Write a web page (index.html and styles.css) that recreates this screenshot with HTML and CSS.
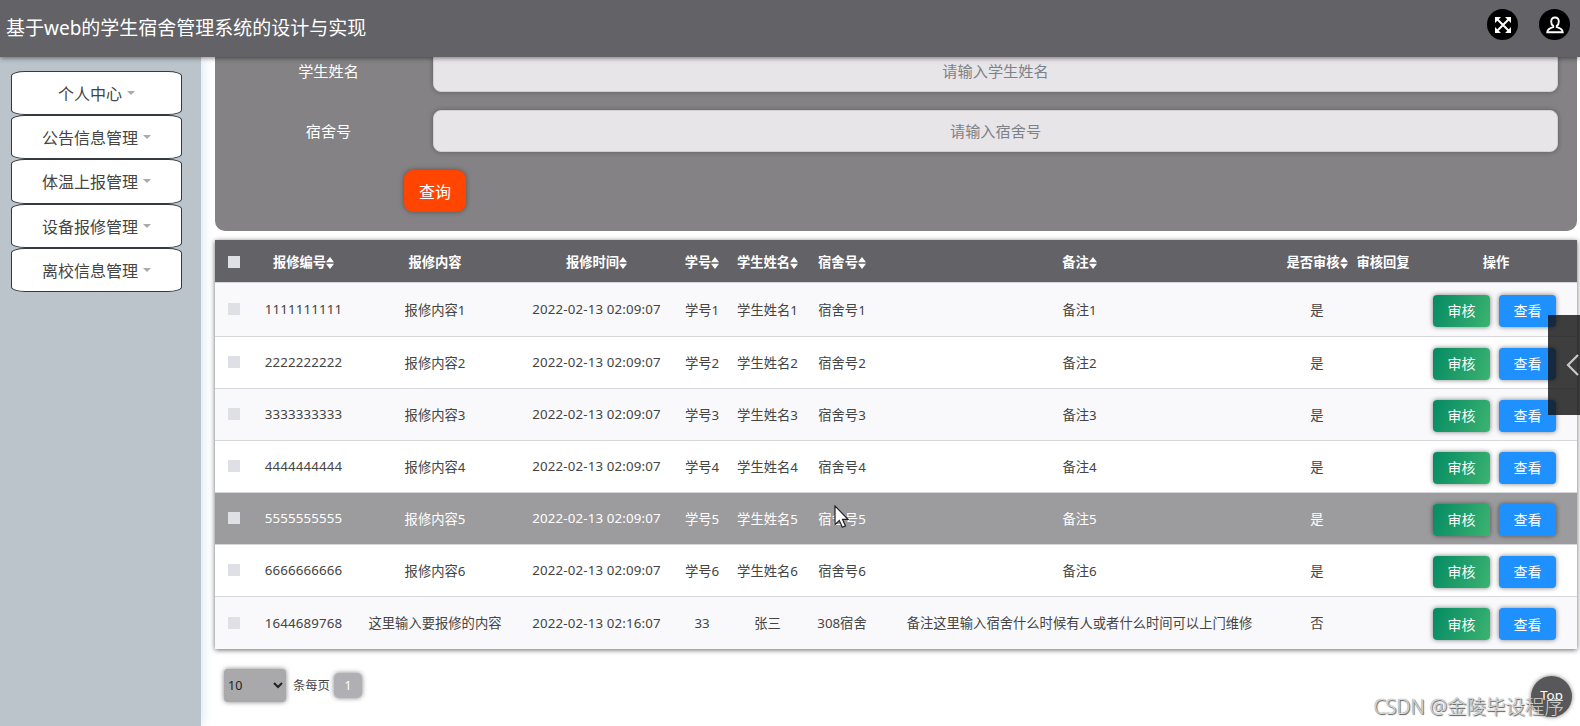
FILE: index.html
```html
<!DOCTYPE html>
<html lang="zh-CN">
<head>
    <meta charset="UTF-8">
    <meta name="viewport" content="width=device-width, initial-scale=1.0">
    <title>基于web的学生宿舍管理系统的设计与实现</title>
    <link rel="stylesheet" href="styles.css">
</head>
<body>
    <svg class="defs" width="0" height="0">
        <symbol id="sort" viewBox="0 0 8 12"><path d="M4 0L8 5.300H0zM4 12L0 6.700h8z"/></symbol>
    </svg>

    <header class="navbar">
        <h1>基于web的学生宿舍管理系统的设计与实现</h1>
        <div class="nav-icons">
            <a class="nav-icon">
                <svg width="16" height="16" viewBox="0 0 16 16"><path d="M2.5 2.5l11 11M13.5 2.5l-11 11" stroke="#fff" stroke-width="2"/><path d="M0 0h6L0 6zM16 0v6l-6-6zM0 16v-6l6 6zM16 16h-6l6-6z" fill="#fff"/></svg>
            </a>
            <a class="nav-icon">
                <svg width="18" height="18" viewBox="0 0 18 18" fill="none" stroke="#fff" stroke-width="1.9"><path d="M9 1.5c-2.6 0-3.8 1.7-3.8 4 0 2 .8 3.600 2 4.400v1.300C4 12 1.600 13 1.300 16.200h15.400C16.400 13 14 12 10.800 11.200V9.900c1.200-.8 2-2.400 2-4.400 0-2.300-1.200-4-3.800-4z"/></svg>
            </a>
        </div>
    </header>

    <div class="wrapper">
        <nav class="sidebar">
            <a class="menu-item">个人中心<i class="caret"></i></a>
            <a class="menu-item">公告信息管理<i class="caret"></i></a>
            <a class="menu-item">体温上报管理<i class="caret"></i></a>
            <a class="menu-item">设备报修管理<i class="caret"></i></a>
            <a class="menu-item">离校信息管理<i class="caret"></i></a>
        </nav>

        <main class="content">
            <form class="search-form">
                <div class="form-row">
                    <label for="xingming">学生姓名</label>
                    <input type="text" id="xingming" placeholder="请输入学生姓名">
                </div>
                <div class="form-row">
                    <label for="sushehao">宿舍号</label>
                    <input type="text" id="sushehao" placeholder="请输入宿舍号">
                </div>
                <button type="button" class="btn-search">查询</button>
            </form>

            <table class="table">
                <colgroup>
                    <col class="c-check"><col class="c-no"><col class="c-text"><col class="c-time"><col class="c-stu"><col class="c-name"><col class="c-room"><col class="c-note"><col class="c-state"><col class="c-reply"><col class="c-op">
                </colgroup>
                <thead>
                    <tr>
                        <th><i class="check"></i></th>
                        <th>报修编号<svg class="sort"><use href="#sort"/></svg></th>
                        <th>报修内容</th>
                        <th>报修时间<svg class="sort"><use href="#sort"/></svg></th>
                        <th>学号<svg class="sort"><use href="#sort"/></svg></th>
                        <th>学生姓名<svg class="sort"><use href="#sort"/></svg></th>
                        <th>宿舍号<svg class="sort"><use href="#sort"/></svg></th>
                        <th>备注<svg class="sort"><use href="#sort"/></svg></th>
                        <th>是否审核<svg class="sort"><use href="#sort"/></svg></th>
                        <th>审核回复</th>
                        <th>操作</th>
                    </tr>
                </thead>
                <tbody>
                    <tr>
                        <td><i class="check"></i></td><td class="num">1111111111</td><td>报修内容1</td><td class="num">2022-02-13 02:09:07</td><td>学号1</td><td>学生姓名1</td><td>宿舍号1</td><td>备注1</td><td>是</td><td></td>
                        <td><div class="ops"><button class="btn btn-audit">审核</button><button class="btn btn-view">查看</button></div></td>
                    </tr>
                    <tr>
                        <td><i class="check"></i></td><td class="num">2222222222</td><td>报修内容2</td><td class="num">2022-02-13 02:09:07</td><td>学号2</td><td>学生姓名2</td><td>宿舍号2</td><td>备注2</td><td>是</td><td></td>
                        <td><div class="ops"><button class="btn btn-audit">审核</button><button class="btn btn-view">查看</button></div></td>
                    </tr>
                    <tr>
                        <td><i class="check"></i></td><td class="num">3333333333</td><td>报修内容3</td><td class="num">2022-02-13 02:09:07</td><td>学号3</td><td>学生姓名3</td><td>宿舍号3</td><td>备注3</td><td>是</td><td></td>
                        <td><div class="ops"><button class="btn btn-audit">审核</button><button class="btn btn-view">查看</button></div></td>
                    </tr>
                    <tr>
                        <td><i class="check"></i></td><td class="num">4444444444</td><td>报修内容4</td><td class="num">2022-02-13 02:09:07</td><td>学号4</td><td>学生姓名4</td><td>宿舍号4</td><td>备注4</td><td>是</td><td></td>
                        <td><div class="ops"><button class="btn btn-audit">审核</button><button class="btn btn-view">查看</button></div></td>
                    </tr>
                    <tr class="active">
                        <td><i class="check"></i></td><td class="num">5555555555</td><td>报修内容5</td><td class="num">2022-02-13 02:09:07</td><td>学号5</td><td>学生姓名5</td><td>宿舍号5</td><td>备注5</td><td>是</td><td></td>
                        <td><div class="ops"><button class="btn btn-audit">审核</button><button class="btn btn-view">查看</button></div></td>
                    </tr>
                    <tr>
                        <td><i class="check"></i></td><td class="num">6666666666</td><td>报修内容6</td><td class="num">2022-02-13 02:09:07</td><td>学号6</td><td>学生姓名6</td><td>宿舍号6</td><td>备注6</td><td>是</td><td></td>
                        <td><div class="ops"><button class="btn btn-audit">审核</button><button class="btn btn-view">查看</button></div></td>
                    </tr>
                    <tr>
                        <td><i class="check"></i></td><td class="num">1644689768</td><td>这里输入要报修的内容</td><td class="num">2022-02-13 02:16:07</td><td>33</td><td>张三</td><td>308宿舍</td><td>备注这里输入宿舍什么时候有人或者什么时间可以上门维修</td><td>否</td><td></td>
                        <td><div class="ops"><button class="btn btn-audit">审核</button><button class="btn btn-view">查看</button></div></td>
                    </tr>
                </tbody>
            </table>

            <div class="pager">
                <select class="page-size"><option>10</option></select>
                <span>条每页</span>
                <a class="page-num">1</a>
            </div>
        </main>
    </div>

    <div class="drawer">
        <svg width="13" height="22" viewBox="0 0 13 22" fill="none" stroke="#c8c8c8" stroke-width="2.200"><path d="M12 1L2 11l10 10"/></svg>
    </div>
    <a class="go-top">Top</a>
    <div class="watermark">CSDN @金陵毕设程序</div>
    <svg class="cursor" width="15" height="24" viewBox="0 0 15 24"><path d="M1 1v18.500l4.300-4 3 6.800 3.200-1.400-3-6.600h5.500z" fill="#fff" stroke="#222" stroke-width="1.200"/></svg>
</body>
</html>
```
FILE: styles.css
```css
* {
    box-sizing: border-box;
}
body {
    margin: 0;
    height: 726px;
    overflow: hidden;
    display: flex;
    flex-direction: column;
    font-family: "Noto Sans", "Noto Sans CJK SC", sans-serif;
    font-size: 13.3px;
    color: #444;
    background: #fff;
}
.defs {
    position: absolute;
}
button, input, select {
    font-family: inherit;
}
.navbar {
    position: relative;
    z-index: 2;
    flex: none;
    height: 57px;
    padding: 0 10px 0 6px;
    display: flex;
    justify-content: space-between;
    background: #636267;
    box-shadow: 0 1px 5px rgba(0, 0, 0, 0.5);
}
.navbar h1 {
    margin: 0;
    font-size: 19px;
    line-height: 57px;
    font-weight: 400;
    color: #fff;
}
.nav-icons {
    display: flex;
    gap: 21px;
    padding-top: 9px;
}
.nav-icon {
    width: 31px;
    height: 31px;
    border-radius: 50%;
    background: #000;
    display: flex;
    align-items: center;
    justify-content: center;
}
.wrapper {
    flex: 1;
    min-height: 0;
    display: flex;
}
.sidebar {
    flex: none;
    width: 201px;
    padding: 14px 19px 0 11px;
    background: #bbc4cb;
    box-shadow: 0 0 12px #cfe2f3;
}
.menu-item {
    height: 44.2px;
    display: flex;
    align-items: center;
    justify-content: center;
    gap: 5px;
    border: 1px solid #343a40;
    border-radius: 14px / 5px;
    background: #fff;
    font-size: 16px;
    color: #444;
}
.caret {
    border: 4.5px solid transparent;
    border-top-color: #aaa;
    border-bottom: 0;
}
.content {
    flex: 1;
    min-width: 0;
    padding: 0 3px 0 14px;
}
.search-form {
    height: 204px;
    margin-top: -30px;
    padding: 23px 19px 0 0;
    border-radius: 10px;
    background: #848284;
}
.form-row {
    display: flex;
    align-items: center;
    height: 42px;
    margin-bottom: 18px;
}
.form-row label {
    width: 218px;
    padding: 0 0 2px 9px;
    text-align: center;
    font-size: 15.2px;
    color: #fff;
}
.form-row input {
    flex: 1;
    height: 42px;
    border: 1px solid #ced0d4;
    border-radius: 8px;
    background: #e7e5e8;
    text-align: center;
    font-size: 15.2px;
    box-shadow: 0 0 5px rgba(0, 0, 0, 0.3);
}
.form-row input::placeholder {
    color: #7c8288;
}
.btn-search {
    display: block;
    width: 62px;
    height: 42px;
    margin-left: 189px;
    padding: 0;
    border: none;
    border-radius: 9px;
    background: #ff4500;
    color: #fff;
    font-size: 16px;
    box-shadow: 0 0 5px rgba(0, 0, 0, 0.4);
}
.table {
    width: 1362px;
    margin-top: 9px;
    table-layout: fixed;
    border-collapse: collapse;
    box-shadow: 0 1px 5px rgba(0, 0, 0, 0.6);
}
.c-check { width: 38px; }
.c-no { width: 101px; }
.c-text { width: 162px; }
.c-time { width: 161px; }
.c-stu { width: 50px; }
.c-name { width: 81px; }
.c-room { width: 68px; }
.c-note { width: 407px; }
.c-state { width: 68px; }
.c-reply { width: 64px; }
.table th, .table td {
    padding: 0;
    text-align: center;
    white-space: nowrap;
}
.table th {
    height: 42px;
    padding-top: 2px;
    background: #636267;
    color: #fff;
    font-weight: 700;
}
.table td {
    height: 52.1px;
    border-top: 1px solid #d5d7da;
}
.table td.num {
    letter-spacing: 0.15px;
}
.table tbody tr {
    background: #fff;
}
.table tbody tr:nth-child(odd) {
    background: #f9f9fb;
}
.table tbody tr:first-child td {
    height: 54px;
}
.table tbody tr.active {
    background: #9c9b9d;
    color: #fff;
}
.check {
    display: block;
    width: 12px;
    height: 12px;
    margin-left: 13px;
    background: #dee0e5;
}
.sort {
    width: 8px;
    height: 12px;
    fill: #fff;
    vertical-align: -2px;
}
.ops {
    display: flex;
    justify-content: center;
    gap: 9px;
    padding: 3px 3px 0 0;
}
.btn {
    width: 57px;
    height: 32px;
    padding: 0 0 1px;
    border: none;
    border-radius: 4px;
    color: #fff;
    font-size: 14px;
    box-shadow: 0 0 5px rgba(0, 0, 0, 0.5);
}
.btn-audit {
    background: linear-gradient(110deg, #048a63, #3cb371);
}
.btn-view {
    background: #1e90ff;
}
.pager {
    display: flex;
    align-items: center;
    margin: 20px 0 0 9px;
    font-size: 12.3px;
}
.page-size {
    width: 62px;
    height: 33px;
    margin-right: 7px;
    border: none;
    border-radius: 4px;
    background: #a9a9ab;
    font-size: 12.5px;
    color: #222;
    box-shadow: 0 0 5px rgba(0, 0, 0, 0.5);
}
.page-num {
    width: 28px;
    height: 25px;
    margin-left: 4px;
    border-radius: 5px;
    background: #b0afb4;
    color: #fff;
    line-height: 25px;
    text-align: center;
    box-shadow: 0 0 5px rgba(0, 0, 0, 0.5);
}
.drawer {
    position: absolute;
    right: 0;
    top: 315px;
    width: 32px;
    height: 100px;
    display: flex;
    align-items: center;
    justify-content: flex-end;
    padding-right: 1px;
    background: rgba(20, 20, 20, 0.82);
}
.go-top {
    position: absolute;
    right: 8px;
    top: 676px;
    width: 41px;
    height: 41px;
    border-radius: 50%;
    background: #58585a;
    color: #fff;
    line-height: 39px;
    text-align: center;
    box-shadow: 0 0 4px rgba(0, 0, 0, 0.5);
}
.watermark {
    position: absolute;
    right: 16px;
    top: 693px;
    font-size: 19.5px;
    line-height: 28px;
    font-weight: 300;
    color: rgba(255, 255, 255, 0.75);
    text-shadow: 1px 1px 1px #555, 0 0 1px #555;
}
.cursor {
    position: absolute;
    left: 834px;
    top: 505px;
}
```
